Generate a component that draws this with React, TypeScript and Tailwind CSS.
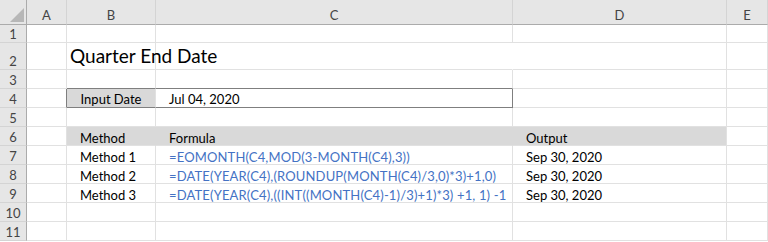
import React from "react";

const cols = ["A", "B", "C", "D", "E"];
// total pixel height of each sheet row, its bottom gridline included
const rowHeights = [18, 27, 19, 19, 19, 19, 19, 19, 19, 19, 19];

const methods = [
  { name: "Method 1", formula: "=EOMONTH(C4,MOD(3-MONTH(C4),3))", output: "Sep 30, 2020" },
  { name: "Method 2", formula: "=DATE(YEAR(C4),(ROUNDUP(MONTH(C4)/3,0)*3)+1,0)", output: "Sep 30, 2020" },
  { name: "Method 3", formula: "=DATE(YEAR(C4),((INT((MONTH(C4)-1)/3)+1)*3) +1, 1) -1", output: "Sep 30, 2020" },
];

function Cell({ className = "", pad = "pl-[13px]", children }: { className?: string; pad?: string; children?: React.ReactNode }) {
  return (
    <div className={`flex items-end overflow-visible whitespace-nowrap border-r border-b border-[#e1e1e1] leading-[14px] ${pad} ${className}`}>
      {children}
    </div>
  );
}

function RowHead({ n }: { n: number }) {
  return (
    <div className="flex items-end justify-center border-r border-b border-r-[#ababab] border-b-[#d4d4d4] bg-[#e6e6e6] pb-[1px] leading-[14px] text-[#444]">
      {n}
    </div>
  );
}

export default function App() {
  const rows: React.ReactNode[][] = [];
  for (let r = 1; r <= 11; r++) {
    const m = methods[r - 7];
    const cells: React.ReactNode[] = [<Cell key="a" />, <Cell key="b" />, <Cell key="c" />, <Cell key="d" />, <Cell key="e" />];
    if (r === 2) {
      cells[1] = (
        <Cell key="b" pad="pl-[3px] pb-[2px]" className="z-10 text-[19px] leading-[22px]">
          Quarter End Date
        </Cell>
      );
      cells[2] = <Cell key="c" className="border-r-transparent" />;
    }
    if (r === 3) {
      cells[1] = <Cell key="b" className="border-b-[#7f7f7f]" />;
      cells[2] = <Cell key="c" className="border-b-[#7f7f7f]" />;
    }
    if (r === 4) {
      cells[0] = <Cell key="a" className="border-r-[#7f7f7f]" />;
      cells[1] = (
        <Cell key="b" pad="justify-center pb-[1px]" className="bg-[#d9d9d9] border-b-[#7f7f7f]">
          Input Date
        </Cell>
      );
      cells[2] = (
        <Cell key="c" pad="pl-[13px] pb-[1px]" className="border-b-[#7f7f7f] border-r-[#7f7f7f]">
          Jul 04, 2020
        </Cell>
      );
    }
    if (r === 6) {
      cells[1] = <Cell key="b" className="bg-[#d9d9d9] border-r-[#d9d9d9]">Method</Cell>;
      cells[2] = <Cell key="c" className="bg-[#d9d9d9] border-r-[#d9d9d9]">Formula</Cell>;
      cells[3] = <Cell key="d" className="bg-[#d9d9d9]">Output</Cell>;
    }
    if (m) {
      cells[1] = <Cell key="b">{m.name}</Cell>;
      cells[2] = <Cell key="c" className="tracking-[0.15px] text-[#4472c4]">{m.formula}</Cell>;
      cells[3] = <Cell key="d">{m.output}</Cell>;
    }
    rows.push([<RowHead key="h" n={r} />, ...cells]);
  }

  return (
    <div
      className="h-[242px] w-[768px] overflow-hidden bg-white text-[13px] text-black"
      style={{ fontFamily: "Lato, 'Liberation Sans', sans-serif" }}
    >
      <div
        className="grid grid-cols-[27px_40px_89px_357px_214px_41px]"
        style={{ gridTemplateRows: `25px ${rowHeights.map((h) => `${h}px`).join(" ")}` }}
      >
        {/* corner with the select-all triangle */}
        <div className="relative border-r border-b border-[#ababab] bg-[#e6e6e6]">
          <svg className="absolute right-[2px] bottom-[2px]" width="14" height="14" viewBox="0 0 14 14">
            <path d="M14 0 L14 14 L0 14 Z" fill="#b7b7b7" />
          </svg>
        </div>
        {cols.map((c) => (
          <div
            key={c}
            className="flex items-end justify-center border-r border-b border-r-[#d4d4d4] border-b-[#ababab] bg-[#e6e6e6] pb-[2px] leading-[14px] text-[#444]"
          >
            {c}
          </div>
        ))}
        {rows.flat()}
      </div>
    </div>
  );
}
